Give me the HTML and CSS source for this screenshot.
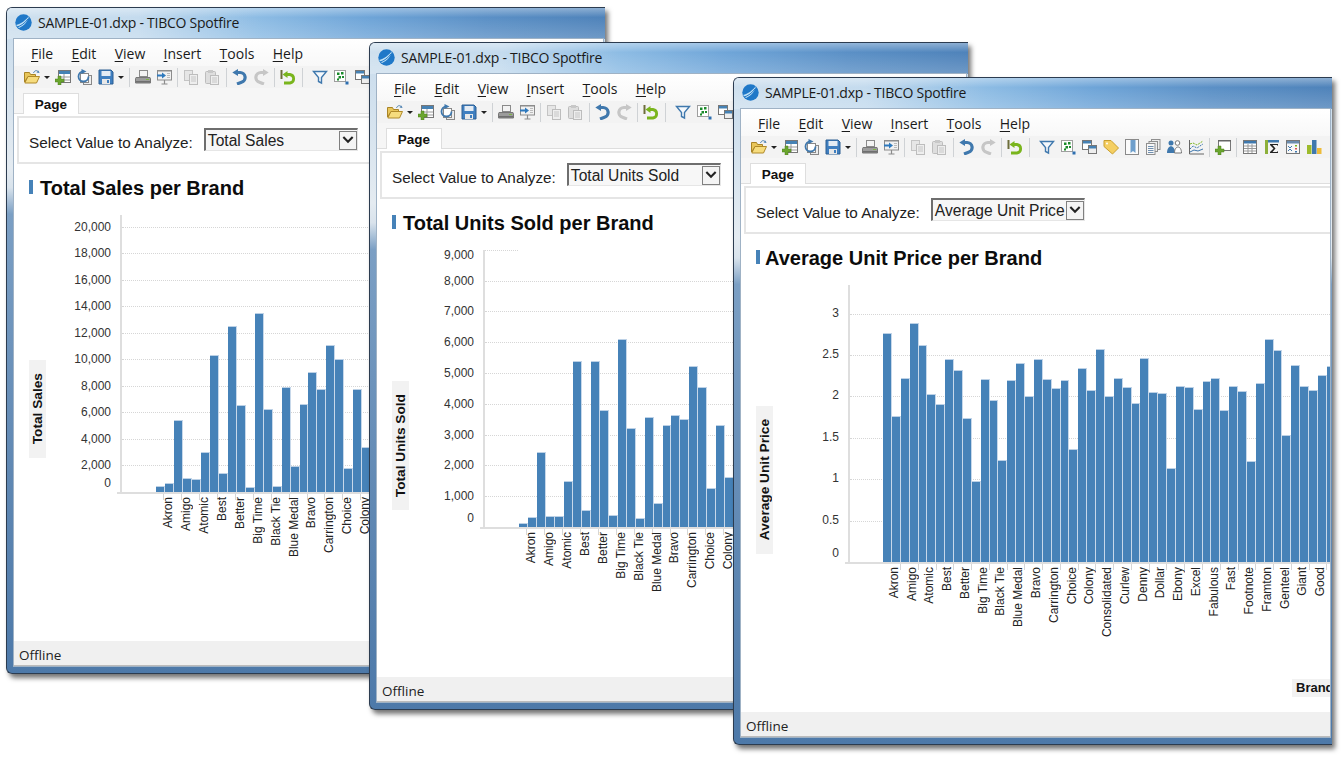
FILE: index.html
```html
<!DOCTYPE html>
<html lang="en">
<head>
<meta charset="utf-8">
<title>TIBCO Spotfire</title>
<link rel="stylesheet" href="styles.css">
</head>
<body>
<svg class="defs" width="0" height="0" aria-hidden="true">
  <symbol id="logo" viewBox="0 0 17 17"><circle cx="8.5" cy="8.5" r="8.2" fill="#1f78c8"/><path d="M1 11C6 10 11 6 14 2c-1 5-5 10-10 12z" fill="#bfe0f5"/><path d="M2 13c4-1 8-4 11-8" stroke="#1f78c8" fill="none"/></symbol>
  <symbol id="open" viewBox="0 0 16 16"><path d="M.5 3.5h5l1 2h5v2H4L.5 13z" fill="#e9c65a" stroke="#a98426"/><path d="M.8 14L4 7.5h11.5L12.5 14z" fill="#f6dc7e" stroke="#b08a2a"/><path d="M9.5 4c1-2.500 3-3 4.500-1.500" stroke="#4a7fb0" fill="none"/><path d="M15.500 4l-3-.5 2-2z" fill="#4a7fb0"/></symbol>
  <symbol id="addt" viewBox="0 0 16 16"><rect x="3.500" y="1.500" width="12" height="12" fill="#fff" stroke="#777"/><rect x="4" y="2" width="11" height="3" fill="#4682b4"/><path d="M9 5v8M4 8h11M4 11h11" stroke="#999"/><path d="M3 7h3v3h3v3H6v3H3v-3H0v-3h3z" fill="#6aa52e" stroke="#4c7f1c" stroke-width=".5"/></symbol>
  <symbol id="refr" viewBox="0 0 16 16"><rect x="7.500" y="6.500" width="8" height="9" fill="#eee" stroke="#888"/><rect x="4.500" y="4.500" width="8" height="9" fill="#fff" stroke="#888"/><path d="M7.500 2.500a5 5 0 1 0 5 5" fill="none" stroke="#3f78ad" stroke-width="1.800"/><path d="M5.500 0l5 2.500-5 2.500z" fill="#3f78ad"/></symbol>
  <symbol id="save" viewBox="0 0 16 16"><path d="M1 1h12l2 2v12H1z" fill="#3f7fc0" stroke="#2c5f92"/><rect x="3.500" y="2" width="9" height="5" fill="#e4ecf4"/><rect x="4" y="10" width="8" height="5" fill="#e8e8e8"/><rect x="9" y="11" width="2" height="3" fill="#3f7fc0"/></symbol>
  <symbol id="print" viewBox="0 0 16 16"><rect x="4.500" y="1.500" width="8" height="6" fill="#f3f3f3" stroke="#8a8a8a"/><path d="M1 8.500h14l.5 1v4.500H.5V9.500z" fill="#9c9c9c" stroke="#777"/><rect x="11" y="10" width="3" height="1" fill="#7db544"/><rect x="1" y="12" width="14" height="1.500" fill="#6f6f6f"/></symbol>
  <symbol id="pres" viewBox="0 0 16 16"><rect x="1.500" y="1.500" width="14" height="9.500" fill="#f1f1f1" stroke="#8c8c8c"/><rect x="1" y="1" width="15" height="1.500" fill="#8c8c8c"/><path d="M8.500 11v3.500M5.500 15h6" stroke="#8c8c8c" stroke-width="1.200"/><path d="M1 5.500h5V3.500l4 3-4 3v-2H1z" fill="#2e79bd"/><path d="M11 4.500h3M11 6.500h3M11 8.500h3" stroke="#bbb"/></symbol>
  <symbol id="copy" viewBox="0 0 16 16"><rect x="1.500" y="1.500" width="8" height="10" fill="#e6e6e6" stroke="#c4c4c4"/><rect x="6.500" y="5.500" width="8" height="10" fill="#eee" stroke="#bdbdbd"/><path d="M8 8h5M8 10h5M8 12h5" stroke="#c6c6c6"/></symbol>
  <symbol id="paste" viewBox="0 0 16 16"><rect x="1.500" y="2.500" width="10" height="12" rx="1" fill="#dedede" stroke="#bdbdbd"/><rect x="4" y="1" width="5" height="3" fill="#c8c8c8"/><rect x="6.500" y="6.500" width="8" height="9" fill="#eee" stroke="#bdbdbd"/><path d="M8 9h5M8 11h5M8 13h5" stroke="#c6c6c6"/></symbol>
  <symbol id="undo" viewBox="0 0 16 16"><path d="M4 3.500h4a5 5 0 0 1 1.500 9.800L5 15" fill="none" stroke="#3f78ad" stroke-width="3.200"/><path d="M.3 3.500L6 0v7z" fill="#3f78ad"/></symbol>
  <symbol id="redo" viewBox="0 0 16 16"><path d="M12 3.500H8A5 5 0 0 0 6.500 13.300L11 15" fill="none" stroke="#c6c6c6" stroke-width="3.200"/><path d="M15.700 3.500L10 0v7z" fill="#c6c6c6"/></symbol>
  <symbol id="reset" viewBox="0 0 16 16"><path d="M1.500 1v9" stroke="#6d6d3a" stroke-width="2"/><path d="M6 5.500h4a4.300 4.300 0 0 1 0 8.500H4" fill="none" stroke="#7ab51d" stroke-width="2.800"/><path d="M2.500 5.500L7.500 2v7z" fill="#7ab51d"/></symbol>
  <symbol id="funnel" viewBox="0 0 16 16"><path d="M1.500 2.500h13l-5 6v5.500l-3-1.500v-4z" fill="#f4f8fc" stroke="#3f78ad" stroke-width="1.400"/></symbol>
  <symbol id="sel" viewBox="0 0 16 16"><rect x="1.500" y="1.500" width="11" height="11" fill="#fff" stroke="#444" stroke-dasharray="1 1"/><path d="M4 3.500h2.500V6H4zM8 3h2.500v2.500H8zM5.500 7H8v2.500H5.500zM9 7h2v2H9zM4 9.500h2V11.500H4z" fill="#1a8a2a"/><rect x="12.500" y="12.500" width="3" height="3" fill="#2e6fb0"/></symbol>
  <symbol id="tabs" viewBox="0 0 16 16"><rect x="1.500" y="1.500" width="9" height="9" fill="#fff" stroke="#777"/><rect x="2" y="2" width="8" height="2.500" fill="#4682b4"/><rect x="7.500" y="6.500" width="8" height="8" fill="#eee" stroke="#777"/><rect x="8" y="7" width="7" height="2.500" fill="#4682b4"/></symbol>
  <symbol id="tag" viewBox="0 0 16 16"><path d="M1 1.500h7L15.500 9l-6 6L1 7.500z" fill="#f5cf62" stroke="#c99f2f"/><circle cx="4" cy="4.500" r="1" fill="#fff"/></symbol>
  <symbol id="mark" viewBox="0 0 16 16"><rect x="1.500" y=".5" width="13" height="15" fill="#fbfbfb" stroke="#8a8a8a"/><path d="M6.500 1h5v13l-2.500-2-2.500 2z" fill="#6e9fcc"/></symbol>
  <symbol id="pages" viewBox="0 0 16 16"><rect x="6.500" y=".5" width="8.500" height="10" fill="#eee" stroke="#8f8f8f"/><rect x="4" y="2.500" width="8.500" height="10" fill="#eee" stroke="#8f8f8f"/><rect x="1.500" y="4.500" width="8.500" height="11" fill="#f7f7f7" stroke="#8f8f8f"/><path d="M3 7.500h5.500M3 9.500h5.500M3 11.500h5.500M3 13.500h5.500" stroke="#6f8fb0"/></symbol>
  <symbol id="peop" viewBox="0 0 16 16"><circle cx="5" cy="4" r="2.500" fill="#3f78ad"/><path d="M1 14c0-9 8-9 8 0z" fill="#3f78ad"/><circle cx="11.500" cy="4" r="2.300" fill="#fff" stroke="#777"/><path d="M8.500 14c0-8 7-8 7 0z" fill="#fff" stroke="#777"/></symbol>
  <symbol id="lines" viewBox="0 0 16 16"><path d="M1.500 1v14H16" fill="none" stroke="#666"/><path d="M2 10l3-3 4 2 6-4" fill="none" stroke="#3f78ad" stroke-dasharray="2 1"/><path d="M2 5l3-1 4 2 6-4" fill="none" stroke="#7ab51d" stroke-dasharray="2 1"/><path d="M2 13l4-2 4 1 5-2" fill="none" stroke="#3f78ad"/></symbol>
  <symbol id="addw" viewBox="0 0 16 16"><rect x="3.500" y="1.500" width="12" height="10" fill="#fff" stroke="#777"/><rect x="3" y="1" width="13" height="1.500" fill="#666"/><path d="M3 7h3v3h3v3H6v3H3v-3H0v-3h3z" fill="#6aa52e" stroke="#4c7f1c" stroke-width=".5"/></symbol>
  <symbol id="tbl" viewBox="0 0 16 16"><rect x="1.500" y="1.500" width="13" height="13" fill="#fff" stroke="#777"/><rect x="2" y="2" width="12" height="2.500" fill="#3f78ad"/><path d="M2 7h12M2 9.500h12M2 12h12M6 5v9M10 5v9" stroke="#999"/></symbol>
  <symbol id="sigma" viewBox="0 0 16 16"><rect x="1" y="1" width="3" height="14" fill="#8db03a"/><rect x="4" y="1" width="11" height="2.500" fill="#3f78ad"/><path d="M6 5h8v2l-1-1H8.500l3 3.500-3 3.500H13l1-1v2H6v-1l3.500-3.500L6 6z" fill="#222"/></symbol>
  <symbol id="cross" viewBox="0 0 16 16"><rect x="1.500" y="1.500" width="13" height="13" fill="#f7f7f7" stroke="#777"/><rect x="2" y="2" width="12" height="2.500" fill="#6a8cae"/><path d="M3 7l2 2 2-2M3 12l2-2 2 2" stroke="#3f78ad" fill="none"/><path d="M10 6h2v1.500h-2z" fill="#7ab51d"/><path d="M10 9h2v1.500h-2z" fill="#d9534f"/><path d="M10 12h2v1.500h-2z" fill="#3f78ad"/></symbol>
  <symbol id="bars" viewBox="0 0 16 16"><rect x="1" y="6" width="4.500" height="9" fill="#9dbb2c"/><rect x="6" y="1" width="4.500" height="14" fill="#3f78ad"/><rect x="11" y="9" width="4.500" height="6" fill="#eebc3a"/></symbol>
  <symbol id="chev" viewBox="0 0 12 12"><path d="M2 3.500l4 4 4-4" fill="none" stroke="#222" stroke-width="1.800"/></symbol>
</svg>

<section class="window w1">
  <header class="titlebar"><svg class="logo"><use href="#logo"/></svg><span>SAMPLE-01.dxp - TIBCO Spotfire</span></header>
  <div class="client">
    <nav class="menu"><span><u>F</u>ile</span><span><u>E</u>dit</span><span><u>V</u>iew</span><span><u>I</u>nsert</span><span><u>T</u>ools</span><span><u>H</u>elp</span></nav>
    <div class="toolbar">
      <svg class="ic c"><use href="#open"/></svg><i class="caret"></i><svg class="ic"><use href="#addt"/></svg><svg class="ic"><use href="#refr"/></svg><svg class="ic c"><use href="#save"/></svg><i class="caret"></i><b class="sep"></b><svg class="ic"><use href="#print"/></svg><svg class="ic"><use href="#pres"/></svg><b class="sep"></b><svg class="ic"><use href="#copy"/></svg><svg class="ic"><use href="#paste"/></svg><b class="sep"></b><svg class="ic"><use href="#undo"/></svg><svg class="ic"><use href="#redo"/></svg><b class="sep"></b><svg class="ic"><use href="#reset"/></svg><b class="sep wide"></b><svg class="ic"><use href="#funnel"/></svg><svg class="ic"><use href="#sel"/></svg><svg class="ic"><use href="#tabs"/></svg><svg class="ic"><use href="#tag"/></svg><svg class="ic"><use href="#mark"/></svg><svg class="ic"><use href="#pages"/></svg><svg class="ic"><use href="#peop"/></svg><svg class="ic"><use href="#lines"/></svg><b class="sep"></b><svg class="ic"><use href="#addw"/></svg><b class="sep"></b><svg class="ic"><use href="#tbl"/></svg><svg class="ic"><use href="#sigma"/></svg><svg class="ic"><use href="#cross"/></svg><svg class="ic"><use href="#bars"/></svg>
    </div>
    <div class="tabstrip"><div class="tab">Page</div></div>
    <div class="filter"><span class="lbl">Select Value to Analyze:</span><div class="select"><span>Total Sales</span><div class="drop"><svg><use href="#chev"/></svg></div></div></div>
    <h2 class="heading">Total Sales per Brand</h2>
    <div class="chart">
      <div class="ytitle yt1"><span>Total Sales</span></div>
      <div class="plot p1">
        <div class="grid s1">
          <div class="g"><em>20,000</em></div><div class="g"><em>18,000</em></div><div class="g"><em>16,000</em></div><div class="g"><em>14,000</em></div><div class="g"><em>12,000</em></div><div class="g"><em>10,000</em></div><div class="g"><em>8,000</em></div><div class="g"><em>6,000</em></div><div class="g"><em>4,000</em></div><div class="g"><em>2,000</em></div><div class="zero"><em>0</em></div>
        </div>
        <div class="bars">
          <i style="height:6px"></i><i style="height:8.7px"></i><i style="height:72.3px"></i><i style="height:14.3px"></i><i style="height:12.7px"></i><i style="height:39.7px"></i><i style="height:137px"></i><i style="height:19px"></i><i style="height:166px"></i><i style="height:87.3px"></i><i style="height:5px"></i><i style="height:179.3px"></i><i style="height:82.7px"></i><i style="height:6px"></i><i style="height:105.3px"></i><i style="height:26.3px"></i><i style="height:88.3px"></i><i style="height:120.3px"></i><i style="height:103.3px"></i><i style="height:147.3px"></i><i style="height:133.3px"></i><i style="height:24px"></i><i style="height:103.3px"></i><i style="height:45.3px"></i>
        </div>
        <div class="cats">
          <div><span>Akron</span></div><div><span>Amigo</span></div><div><span>Atomic</span></div><div><span>Best</span></div><div><span>Better</span></div><div><span>Big Time</span></div><div><span>Black Tie</span></div><div><span>Blue Medal</span></div><div><span>Bravo</span></div><div><span>Carrington</span></div><div><span>Choice</span></div><div><span>Colony</span></div>
        </div>
      </div>
    </div>
    <footer class="status">Offline</footer>
  </div>
</section>

<section class="window w2">
  <header class="titlebar"><svg class="logo"><use href="#logo"/></svg><span>SAMPLE-01.dxp - TIBCO Spotfire</span></header>
  <div class="client">
    <nav class="menu"><span><u>F</u>ile</span><span><u>E</u>dit</span><span><u>V</u>iew</span><span><u>I</u>nsert</span><span><u>T</u>ools</span><span><u>H</u>elp</span></nav>
    <div class="toolbar">
      <svg class="ic c"><use href="#open"/></svg><i class="caret"></i><svg class="ic"><use href="#addt"/></svg><svg class="ic"><use href="#refr"/></svg><svg class="ic c"><use href="#save"/></svg><i class="caret"></i><b class="sep"></b><svg class="ic"><use href="#print"/></svg><svg class="ic"><use href="#pres"/></svg><b class="sep"></b><svg class="ic"><use href="#copy"/></svg><svg class="ic"><use href="#paste"/></svg><b class="sep"></b><svg class="ic"><use href="#undo"/></svg><svg class="ic"><use href="#redo"/></svg><b class="sep"></b><svg class="ic"><use href="#reset"/></svg><b class="sep wide"></b><svg class="ic"><use href="#funnel"/></svg><svg class="ic"><use href="#sel"/></svg><svg class="ic"><use href="#tabs"/></svg><svg class="ic"><use href="#tag"/></svg><svg class="ic"><use href="#mark"/></svg><svg class="ic"><use href="#pages"/></svg><svg class="ic"><use href="#peop"/></svg><svg class="ic"><use href="#lines"/></svg><b class="sep"></b><svg class="ic"><use href="#addw"/></svg><b class="sep"></b><svg class="ic"><use href="#tbl"/></svg><svg class="ic"><use href="#sigma"/></svg><svg class="ic"><use href="#cross"/></svg><svg class="ic"><use href="#bars"/></svg>
    </div>
    <div class="tabstrip"><div class="tab">Page</div></div>
    <div class="filter"><span class="lbl">Select Value to Analyze:</span><div class="select"><span>Total Units Sold</span><div class="drop"><svg><use href="#chev"/></svg></div></div></div>
    <h2 class="heading">Total Units Sold per Brand</h2>
    <div class="chart">
      <div class="ytitle yt2"><span>Total Units Sold</span></div>
      <div class="plot p2">
        <div class="grid s2">
          <div class="g first"><em>9,000</em></div><div class="g"><em>8,000</em></div><div class="g"><em>7,000</em></div><div class="g"><em>6,000</em></div><div class="g"><em>5,000</em></div><div class="g"><em>4,000</em></div><div class="g"><em>3,000</em></div><div class="g"><em>2,000</em></div><div class="g"><em>1,000</em></div><div class="zero"><em>0</em></div>
        </div>
        <div class="bars">
          <i style="height:4.3px"></i><i style="height:10px"></i><i style="height:74.7px"></i><i style="height:11px"></i><i style="height:11px"></i><i style="height:45.7px"></i><i style="height:165.7px"></i><i style="height:17.3px"></i><i style="height:165.7px"></i><i style="height:117px"></i><i style="height:11.7px"></i><i style="height:188px"></i><i style="height:99.3px"></i><i style="height:9px"></i><i style="height:110.3px"></i><i style="height:24px"></i><i style="height:102px"></i><i style="height:112.3px"></i><i style="height:107.7px"></i><i style="height:161px"></i><i style="height:140.3px"></i><i style="height:39px"></i><i style="height:102px"></i><i style="height:50.3px"></i>
        </div>
        <div class="cats">
          <div><span>Akron</span></div><div><span>Amigo</span></div><div><span>Atomic</span></div><div><span>Best</span></div><div><span>Better</span></div><div><span>Big Time</span></div><div><span>Black Tie</span></div><div><span>Blue Medal</span></div><div><span>Bravo</span></div><div><span>Carrington</span></div><div><span>Choice</span></div><div><span>Colony</span></div>
        </div>
      </div>
    </div>
    <footer class="status">Offline</footer>
  </div>
</section>

<section class="window w3">
  <header class="titlebar"><svg class="logo"><use href="#logo"/></svg><span>SAMPLE-01.dxp - TIBCO Spotfire</span></header>
  <div class="client">
    <nav class="menu"><span><u>F</u>ile</span><span><u>E</u>dit</span><span><u>V</u>iew</span><span><u>I</u>nsert</span><span><u>T</u>ools</span><span><u>H</u>elp</span></nav>
    <div class="toolbar">
      <svg class="ic c"><use href="#open"/></svg><i class="caret"></i><svg class="ic"><use href="#addt"/></svg><svg class="ic"><use href="#refr"/></svg><svg class="ic c"><use href="#save"/></svg><i class="caret"></i><b class="sep"></b><svg class="ic"><use href="#print"/></svg><svg class="ic"><use href="#pres"/></svg><b class="sep"></b><svg class="ic"><use href="#copy"/></svg><svg class="ic"><use href="#paste"/></svg><b class="sep"></b><svg class="ic"><use href="#undo"/></svg><svg class="ic"><use href="#redo"/></svg><b class="sep"></b><svg class="ic"><use href="#reset"/></svg><b class="sep wide"></b><svg class="ic"><use href="#funnel"/></svg><svg class="ic"><use href="#sel"/></svg><svg class="ic"><use href="#tabs"/></svg><svg class="ic"><use href="#tag"/></svg><svg class="ic"><use href="#mark"/></svg><svg class="ic"><use href="#pages"/></svg><svg class="ic"><use href="#peop"/></svg><svg class="ic"><use href="#lines"/></svg><b class="sep"></b><svg class="ic"><use href="#addw"/></svg><b class="sep"></b><svg class="ic"><use href="#tbl"/></svg><svg class="ic"><use href="#sigma"/></svg><svg class="ic"><use href="#cross"/></svg><svg class="ic"><use href="#bars"/></svg>
    </div>
    <div class="tabstrip"><div class="tab">Page</div></div>
    <div class="filter"><span class="lbl">Select Value to Analyze:</span><div class="select"><span>Average Unit Price</span><div class="drop"><svg><use href="#chev"/></svg></div></div></div>
    <h2 class="heading">Average Unit Price per Brand</h2>
    <div class="chart">
      <div class="ytitle yt3"><span>Average Unit Price</span></div>
      <div class="plot p3">
        <div class="grid s3">
          <div class="g"><em>3</em></div><div class="g"><em>2.5</em></div><div class="g"><em>2</em></div><div class="g"><em>1.5</em></div><div class="g"><em>1</em></div><div class="g"><em>0.5</em></div><div class="zero"><em>0</em></div>
        </div>
        <div class="bars">
          <i style="height:229px"></i><i style="height:145.7px"></i><i style="height:184px"></i><i style="height:238.7px"></i><i style="height:217px"></i><i style="height:168px"></i><i style="height:158px"></i><i style="height:202.7px"></i><i style="height:191.7px"></i><i style="height:144px"></i><i style="height:81px"></i><i style="height:183px"></i><i style="height:161.7px"></i><i style="height:102.3px"></i><i style="height:182.3px"></i><i style="height:199px"></i><i style="height:166.3px"></i><i style="height:202.7px"></i><i style="height:183px"></i><i style="height:173.7px"></i><i style="height:182.3px"></i><i style="height:112.7px"></i><i style="height:194.3px"></i><i style="height:172px"></i><i style="height:213px"></i><i style="height:165.7px"></i><i style="height:184px"></i><i style="height:174.7px"></i><i style="height:159px"></i><i style="height:203.7px"></i><i style="height:170px"></i><i style="height:169px"></i><i style="height:94px"></i><i style="height:175.7px"></i><i style="height:174.7px"></i><i style="height:153px"></i><i style="height:181.3px"></i><i style="height:184px"></i><i style="height:152.3px"></i><i style="height:175.7px"></i><i style="height:171px"></i><i style="height:100.7px"></i><i style="height:178.7px"></i><i style="height:223.3px"></i><i style="height:212.3px"></i><i style="height:126.7px"></i><i style="height:197px"></i><i style="height:175.7px"></i><i style="height:172px"></i><i style="height:187px"></i><i style="height:196.3px"></i>
        </div>
        <div class="cats">
          <div><span>Akron</span></div><div><span>Amigo</span></div><div><span>Atomic</span></div><div><span>Best</span></div><div><span>Better</span></div><div><span>Big Time</span></div><div><span>Black Tie</span></div><div><span>Blue Medal</span></div><div><span>Bravo</span></div><div><span>Carrington</span></div><div><span>Choice</span></div><div><span>Colony</span></div><div><span>Consolidated</span></div><div><span>Curlew</span></div><div><span>Denny</span></div><div><span>Dollar</span></div><div><span>Ebony</span></div><div><span>Excel</span></div><div><span>Fabulous</span></div><div><span>Fast</span></div><div><span>Footnote</span></div><div><span>Framton</span></div><div><span>Genteel</span></div><div><span>Giant</span></div><div><span>Good</span></div>
        </div>
      </div>
      <div class="xtitle">Brand</div>
    </div>
    <footer class="status">Offline</footer>
  </div>
</section>
</body>
</html>
```

FILE: styles.css
```css
* { box-sizing: border-box; }

html, body {
  margin: 0;
  height: 100%;
  overflow: hidden;
  background: #fff;
}

body {
  position: relative;
  font-family: "Liberation Sans", Arial, sans-serif;
  color: #111;
}

.defs { position: absolute; }

.window {
  position: absolute;
  width: 599px;
  height: 668px;
  display: flex;
  flex-direction: column;
  padding: 0 0 7px 7px;
  border: 1px solid #2c3c50;
  border-right: 0;
  border-radius: 6px 0 0 6px;
  background: linear-gradient(180deg, #c7dbec 0, #e4ebf1 24%, #d9e3ec 27%, #7b9fc4 31%, #6088b3 70%, #4d79a9 100%);
  box-shadow: 3px 4px 5px rgba(0, 0, 0, .55);
}

.w1 { left: 6px; top: 7px; height: 667px; }
.w2 { left: 369px; top: 42px; }
.w3 { left: 733px; top: 77px; }

.titlebar {
  flex: none;
  height: 31px;
  margin-left: -7px;
  padding: 0 0 3px 8px;
  display: flex;
  align-items: center;
  gap: 6px;
  font: 14px "Open Sans", "Noto Sans", sans-serif;
  letter-spacing: -.25px;
  color: #1a1a1a;
  border-radius: 5px 0 0 0;
  background:
    linear-gradient(180deg, rgba(255, 255, 255, .35) 0, rgba(255, 255, 255, 0) 30%, rgba(255, 255, 255, .18) 100%),
    linear-gradient(90deg, #cfe0ee 0, #c4dbee 22%, #8dbce4 42%, #6fa5d8 60%, #5b90c6 80%, #4f83ba 100%);
}

.logo { width: 17px; height: 17px; flex: none; }

.client {
  flex: 1;
  min-height: 0;
  display: flex;
  flex-direction: column;
  overflow: hidden;
  margin-right: 2px;
  background: #fff;
  box-shadow: 0 0 0 1px #9fb2c5;
}

.menu {
  flex: none;
  height: 27px;
  padding: 1px 0 0 17px;
  display: flex;
  align-items: center;
  gap: 18.3px;
  font: 14px "Open Sans", "Noto Sans", sans-serif;
  color: #1a1a1a;
  background: linear-gradient(180deg, #fff, #f8f8f8);
}

.menu u { text-underline-offset: 2px; }

.toolbar {
  flex: none;
  height: 22px;
  padding-left: 10px;
  display: flex;
  align-items: center;
  white-space: nowrap;
  background: #f3f3f3;
}

.ic { flex: none; width: 16px; height: 16px; margin-right: 5.3px; }
.ic.c { margin-right: 4px; }

.caret {
  flex: none;
  width: 0;
  height: 0;
  margin-right: 5px;
  border: 3px solid transparent;
  border-top-color: #222;
  border-bottom-width: 0;
}

.sep {
  flex: none;
  width: 1px;
  height: 19px;
  margin: 0 5px 0 0;
  background: #cfd2d5;
}

.sep.wide { margin-right: 9px; }

.tabstrip {
  flex: none;
  height: 26px;
  padding: 5px 0 0 9px;
  background: #f6f6f6;
  border-bottom: 1px solid #dedede;
}

.tab {
  width: 56px;
  height: 21px;
  font: bold 13.5px/21px "Liberation Sans", Arial, sans-serif;
  text-align: center;
  background: #fff;
  border: 1px solid #dedede;
  border-bottom: 0;
}

.filter {
  flex: none;
  height: 48px;
  margin: 2px 0 0 3px;
  padding-left: 10px;
  display: flex;
  align-items: center;
  gap: 11px;
  border: 2px solid #e5e5e5;
  border-right: 0;
  font-size: 15.3px;
  color: #222;
}

.lbl { margin-top: 6px; }

.select {
  width: 154px;
  height: 23px;
  margin-top: -1px;
  padding-left: 2px;
  display: flex;
  align-items: center;
  justify-content: space-between;
  background: #f7f7f7;
  border: 2px solid #e6e6e6;
  border-top-color: #6e6e6e;
  border-left-color: #6e6e6e;
  border-right-width: 1px;
  border-bottom-width: 1px;
  white-space: nowrap;
  font-size: 15.6px;
  line-height: 20px;
}

.select span { padding-top: 1px; }

.drop {
  flex: none;
  width: 18px;
  height: 19px;
  display: flex;
  align-items: center;
  justify-content: center;
  background: #f4f4f4;
  border: 1px solid #808080;
}

.drop svg { width: 14px; height: 14px; }

.heading {
  flex: none;
  height: 48px;
  margin: 0;
  padding-left: 15px;
  display: flex;
  align-items: center;
  gap: 7px;
  font-size: 20px;
  font-weight: bold;
  color: #0c0c0c;
}

.w3 .heading { gap: 5px; }

.heading::before {
  content: "";
  width: 4px;
  height: 14px;
  margin-top: -2px;
  background: #4682b8;
}

.chart {
  flex: 1;
  min-height: 0;
  position: relative;
  display: flex;
  align-items: flex-start;
  padding-left: 15px;
}

.ytitle {
  flex: none;
  width: 17px;
  display: flex;
  align-items: center;
  justify-content: center;
  background: #f2f2f2;
}

.ytitle span {
  writing-mode: vertical-rl;
  transform: rotate(180deg);
  font-size: 13.7px;
  font-weight: bold;
  white-space: nowrap;
  color: #111;
}

.yt1 { height: 98px; margin-top: 148px; }
.yt2 { height: 129px; margin-top: 134px; }
.yt3 { height: 148px; margin-top: 124px; }

.plot {
  position: relative;
  flex: none;
  width: 600px;
  height: 279px;
  margin: 3px 0 0 74px;
  border-left: 2px solid #dedede;
  border-bottom: 2px solid #dedede;
  --p: 8.97px;
}

.p3 { margin-left: 75px; --p: 8.885px; }

.plot::after {
  content: "";
  position: absolute;
  left: -5px;
  bottom: -2px;
  width: 5px;
  height: 2px;
  background: #dedede;
}

.grid {
  position: absolute;
  inset: 0;
  display: flex;
  flex-direction: column;
  justify-content: flex-end;
}

.g {
  flex: none;
  position: relative;
  height: var(--row);
  border-top: 1px dotted #d6d6d6;
}

.zero {
  flex: none;
  position: relative;
  height: 0;
}

.s1 { --row: 26.55px; }
.s2 { --row: 30.8px; }
.s3 { --row: 41.4px; }

.g.first { border-top: 0; }
.g.first::before {
  content: "";
  position: absolute;
  left: 0;
  top: 0;
  width: 33px;
  border-top: 1px dotted #d6d6d6;
}

.grid em {
  position: absolute;
  right: calc(100% + 11px);
  top: -8px;
  font-style: normal;
  font-size: 12px;
  line-height: 15px;
  color: #333;
}

.s3 .g em { top: -9px; }
.g.first em { top: -2px; }
.zero em, .s3 .zero em { top: -16px; }

.bars {
  position: absolute;
  left: 34px;
  bottom: 0;
  display: flex;
  align-items: flex-end;
}

.p3 .bars { left: 33px; }

.bars i {
  flex: none;
  width: var(--p);
  background: #4682b8;
  border-right: 1px solid #c7d8ea;
  border-top: 1px solid #bcd1e6;
}

.cats {
  position: absolute;
  left: 37px;
  top: 100%;
  margin-top: 2px;
  display: flex;
  align-items: flex-start;
  --tick: 4px;
}

.p3 .cats { left: 35px; --tick: 15px; }

.cats div {
  flex: none;
  position: relative;
  width: calc(var(--p) * 2);
  display: flex;
  align-items: flex-start;
  justify-content: center;
  padding-top: 3px;
}

.cats div::before {
  content: "";
  position: absolute;
  left: var(--tick);
  top: 0;
  width: 1px;
  height: 6px;
  background: #d6d6d6;
}

.cats span {
  writing-mode: vertical-rl;
  transform: rotate(180deg);
  font-size: 12px;
  line-height: 14px;
  white-space: nowrap;
  color: #222;
}

.xtitle {
  position: absolute;
  left: 551px;
  top: 397px;
  width: 60px;
  height: 18px;
  padding-left: 4px;
  font-size: 13px;
  font-weight: bold;
  line-height: 18px;
  background: #f2f2f2;
}

.status {
  flex: none;
  height: 25px;
  padding: 0 0 0 5px;
  font: 13.5px/28px "Open Sans", "Noto Sans", sans-serif;
  color: #222;
  background: #f0f0f0;
  border-bottom: 1px solid #bbb;
}
```
